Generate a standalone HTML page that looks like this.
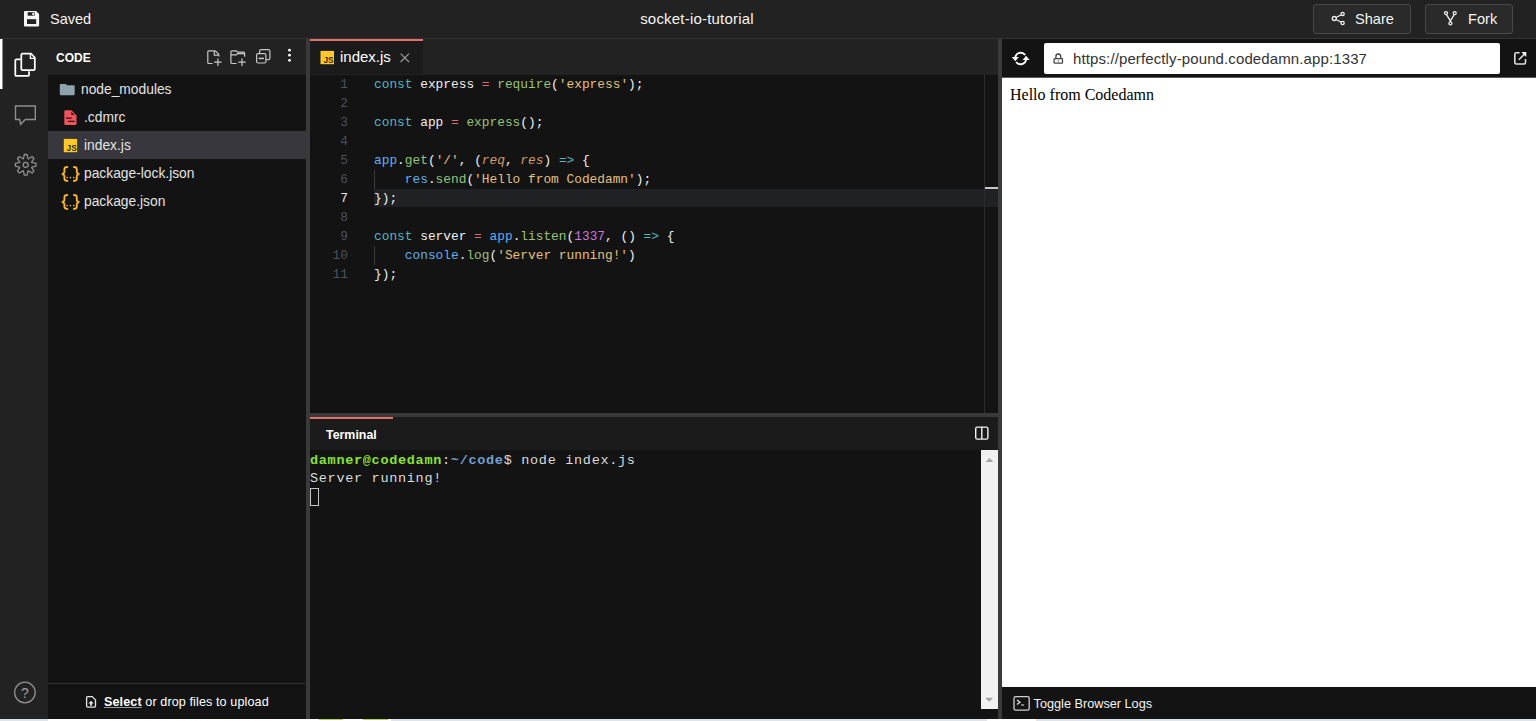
<!DOCTYPE html>
<html lang="en">
<head>
<meta charset="utf-8">
<title>socket-io-tutorial</title>
<style>
*{box-sizing:border-box;margin:0;padding:0}
html,body{width:1536px;height:721px;overflow:hidden;background:#dfe4ea}
body{font-family:"Liberation Sans",sans-serif;color:#fff;position:relative;font-size:14px}
.abs{position:absolute}
#top{left:0;top:0;width:1536px;height:39px;background:#222;border-bottom:1px solid #333}
#top .saved{left:50px;top:10px;font-size:14.5px;line-height:18px;color:#f4f4f4}
#top .title{left:0;width:1394px;top:10px;text-align:center;font-size:15px;letter-spacing:.2px;line-height:18px;color:#f4f4f4}
.btn{top:4px;height:30px;border:1px solid #494949;border-radius:3px;background:#2a2a2a;font-size:14.6px;line-height:28px;color:#f4f4f4}
#act{left:0;top:39px;width:48px;height:680px;background:#222}
#act .ind{left:0;top:0;width:3px;height:50px;background:linear-gradient(90deg,#fff 0,#fff 2px,#8c8c8c 2px)}
#files{left:48px;top:39px;width:258px;height:680px;background:#131313}
#files .hd{left:0;top:0;width:258px;height:36px;background:#222}
#files .hd .t{left:8px;top:11.6px;font-size:12px;font-weight:bold;line-height:14px;color:#fff}
.row{left:0;width:258px;height:28px;font-size:13.8px;line-height:29px;color:#e4e4e4}
.row.sel{background:#37373d}
.row span{position:absolute;top:0}
#files .up{left:0;top:644px;width:258px;height:36px;border-top:1px solid #303030;font-size:12.6px;letter-spacing:.1px;line-height:36px;color:#fff}
.vdiv{top:39px;width:4px;height:680px;background:#3a3a3a}
#tabs{left:310px;top:39px;width:688px;height:36px;background:#222}
#tabs .tab{left:0;top:0;width:113px;height:35px;background:#1b1b1b;border-top:2px solid #e2716a}
#tabs .tab .n{left:30px;top:7px;font-size:15px;line-height:18px;color:#fff}
#ed{left:310px;top:75px;width:688px;height:338px;background:#131313;overflow:hidden}
.ln{position:absolute;left:0;width:38px;text-align:right;color:#495162}
.cl{position:absolute;left:64px;white-space:pre}
#ed,.mono{font-family:"Liberation Mono",monospace;font-size:12.83px;line-height:19px}
.k{color:#56b6c2}.w{color:#f0f0f0}.r{color:#e06c75}.g{color:#98c379}.y{color:#e5c07b}.b{color:#61afef}.p{color:#c678dd}.o{color:#d19a66}.i{color:#d19a66;font-style:italic}
#hdiv{left:310px;top:413px;width:688px;height:4px;background:#3a3a3a}
#term{left:310px;top:417px;width:688px;height:302px;background:#131313}
#term .hd{left:0;top:0;width:688px;height:33px;background:#1b1b1b}
#term .hd .bar{left:0;top:0;width:83px;height:2px;background:#e2716a}
#term .hd .t{left:16px;top:10.5px;font-size:12.4px;font-weight:bold;line-height:14px}
#term .scr{left:671px;top:33px;width:17px;height:259px;background:#f1f1f1}
.tl{position:absolute;left:0;white-space:pre;font-family:"Liberation Mono",monospace;font-size:13.5px;letter-spacing:.7px;line-height:18px;color:#dcdcdc}
#br{left:1002px;top:39px;width:534px;height:680px;background:#131313}
#br .url{left:42px;top:4px;width:456px;height:31px;background:#fff;border-radius:2px;color:#333;font-size:15px;letter-spacing:.115px;line-height:31px}
#br .page{left:0;top:39px;width:534px;height:609px;background:#fff;color:#000;font-family:"Liberation Serif",serif;font-size:16px;line-height:18px}
#br .ft{left:0;top:648px;width:534px;height:32px;font-size:12.7px;line-height:32px;color:#f4f4f4}
</style>
</head>
<body>
<div class="abs" style="left:48px;top:719px;width:343px;height:2px;background:#fff"></div><div class="abs" style="left:987px;top:719px;width:49px;height:2px;background:#fff"></div><div class="abs" style="left:319px;top:719px;width:24px;height:1px;background:#b4cf4a"></div><div class="abs" style="left:363px;top:719px;width:25px;height:1px;background:#b4cf4a"></div>
<div id="top" class="abs">
  <div class="abs saved">Saved</div>
  <div class="abs title">socket-io-tutorial</div>
  <div class="abs btn" style="left:1313px;width:98px"><span class="abs" style="left:41px;top:0">Share</span></div>
  <div class="abs btn" style="left:1425px;width:88px"><span class="abs" style="left:42px;top:0">Fork</span></div>
</div>
<div id="act" class="abs"><div class="abs ind"></div></div>
<div id="files" class="abs">
  <div class="abs hd"><div class="abs t">CODE</div></div>
  <div class="abs row" style="top:36px"><span style="left:33px">node_modules</span></div>
  <div class="abs row" style="top:64px"><span style="left:36px">.cdmrc</span></div>
  <div class="abs row sel" style="top:92px"><span style="left:36px">index.js</span></div>
  <div class="abs row" style="top:120px"><span style="left:36px">package-lock.json</span></div>
  <div class="abs row" style="top:148px"><span style="left:36px">package.json</span></div>
  <div class="abs up"><span class="abs" style="left:56px;top:0;white-space:pre"><b style="text-decoration:underline;text-decoration-color:#9a9a9a">Select</b> or drop files to upload</span></div>
</div>
<div class="abs vdiv" style="left:306px"></div>
<div id="tabs" class="abs"><div class="abs tab"><div class="abs n">index.js</div></div></div>
<div id="ed" class="abs">
  <div class="abs" style="left:64px;top:114px;width:624px;height:18px;background:#1f2125"></div>
  <div class="abs" style="left:64px;top:95px;width:1px;height:19px;background:#3b3b3b"></div>
  <div class="abs" style="left:64px;top:171px;width:1px;height:19px;background:#3b3b3b"></div>
  <div class="ln" style="top:0px">1</div><div class="cl" style="top:0px"><span class="k">const</span> <span class="w">express</span> <span class="r">=</span> <span class="g">require</span><span class="w">(</span><span class="y">'express'</span><span class="w">);</span></div>
  <div class="ln" style="top:19px">2</div><div class="cl" style="top:19px"></div>
  <div class="ln" style="top:38px">3</div><div class="cl" style="top:38px"><span class="k">const</span> <span class="w">app</span> <span class="r">=</span> <span class="g">express</span><span class="w">();</span></div>
  <div class="ln" style="top:57px">4</div><div class="cl" style="top:57px"></div>
  <div class="ln" style="top:76px">5</div><div class="cl" style="top:76px"><span class="b">app</span><span class="w">.</span><span class="g">get</span><span class="w">(</span><span class="y">'/'</span><span class="w">, (</span><span class="i">req</span><span class="w">, </span><span class="i">res</span><span class="w">) </span><span class="k">=&gt;</span><span class="w"> {</span></div>
  <div class="ln" style="top:95px">6</div><div class="cl" style="top:95px">    <span class="b">res</span><span class="w">.</span><span class="g">send</span><span class="w">(</span><span class="y">'Hello from Codedamn'</span><span class="w">);</span></div>
  <div class="ln" style="top:114px;color:#e8e8e8">7</div><div class="cl" style="top:114px"><span class="w">});</span></div>
  <div class="ln" style="top:133px">8</div><div class="cl" style="top:133px"></div>
  <div class="ln" style="top:152px">9</div><div class="cl" style="top:152px"><span class="k">const</span> <span class="w">server</span> <span class="r">=</span> <span class="b">app</span><span class="w">.</span><span class="g">listen</span><span class="w">(</span><span class="p">1337</span><span class="w">, () </span><span class="k">=&gt;</span><span class="w"> {</span></div>
  <div class="ln" style="top:171px">10</div><div class="cl" style="top:171px">    <span class="b">console</span><span class="w">.</span><span class="g">log</span><span class="w">(</span><span class="y">'Server running!'</span><span class="w">)</span></div>
  <div class="ln" style="top:190px">11</div><div class="cl" style="top:190px"><span class="w">});</span></div>
  <div class="abs" style="left:674px;top:0;width:1px;height:338px;background:#2c2c2c"></div>
  <div class="abs" style="left:675px;top:112px;width:13px;height:2px;background:#c8c8c2"></div>
</div>
<div id="hdiv" class="abs"></div>
<div id="term" class="abs">
  <div class="abs hd"><div class="abs bar"></div><div class="abs t">Terminal</div></div>
  <div class="tl" style="top:34.5px"><b style="color:#8ae234">damner@codedamn</b>:<b style="color:#729fcf">~/code</b>$ node index.js</div>
  <div class="tl" style="top:52.5px">Server running!</div>
  <div class="abs" style="left:0;top:70.5px;width:9px;height:18px;border:1px solid #c4c4c4"></div>
  <div class="abs scr"></div>
</div>
<div class="abs vdiv" style="left:998px"></div>
<div id="br" class="abs">
  <div class="abs url"><span class="abs" style="left:29px;top:0">https://perfectly-pound.codedamn.app:1337</span></div>
  <div class="abs" style="left:0;top:38px;width:534px;height:1px;background:#5a5a5a"></div>
  <div class="abs page"><div class="abs" style="left:8px;top:8px">Hello from Codedamn</div></div>
  <div class="abs ft"><span class="abs" style="left:31.6px;top:1px">Toggle Browser Logs</span></div>
</div>
<svg class="abs" style="left:0;top:0" width="1536" height="721" viewBox="0 0 1536 721" fill="none">
<!-- save -->
<path d="M24 12.1a1.1 1.1 0 0 1 1.1-1.1h10.9l3.1 3.1v11.4a1.1 1.1 0 0 1-1.1 1.1h-12.9a1.1 1.1 0 0 1-1.1-1.1z" fill="#f6f6f6"/>
<rect x="27.7" y="12.2" width="7" height="3.5" fill="#222"/><rect x="32.3" y="12.8" width="1.9" height="2.4" fill="#f6f6f6"/>
<rect x="27" y="19.2" width="9.2" height="4.8" fill="#222"/>
<!-- share -->
<g stroke="#f0f0f0" stroke-width="1.3"><circle cx="1334.3" cy="18.5" r="2"/><circle cx="1342.6" cy="13.9" r="1.6"/><circle cx="1342.6" cy="23" r="1.6"/><path d="M1336.1 17.5l5.1-2.8M1336.1 19.5l5.1 2.8"/></g>
<!-- fork -->
<g stroke="#f0f0f0" stroke-width="1.3"><circle cx="1446" cy="13.1" r="1.5"/><circle cx="1454.7" cy="13.1" r="1.5"/><circle cx="1450.4" cy="23.4" r="1.5"/><path d="M1446.5 14.6l3.9 6.3 3.8-6.3M1450.4 20.5v1.4"/></g>
<!-- activity: files -->
<g stroke="#fff" stroke-width="1.75" stroke-linejoin="round"><path d="M22.4 53.7h8.6l3.8 3.8v11.4a1.1 1.1 0 0 1-1.1 1.1h-11.3a1.1 1.1 0 0 1-1.1-1.1v-14.1a1.1 1.1 0 0 1 1.1-1.1z"/><path d="M20.6 59.3h-4.2a1.1 1.1 0 0 0-1.1 1.1v14.5a1.1 1.1 0 0 0 1.1 1.1h11.5a1.1 1.1 0 0 0 1.1-1.1v-3.6"/><path d="M30.4 54.2v4.2h4.2" stroke-width="1.3"/></g>
<!-- activity: comment -->
<path d="M15.5 106h19.8v13.5h-10l-4.7 4.7-0.9-4.7h-4.2z" stroke="#8e8e8e" stroke-width="1.4"/>
<!-- activity: gear -->
<path d="M23.25 158.89 L23.63 157.59 L24.34 154.49 L27.06 154.49 L27.77 157.59 L28.15 158.89 L29.34 158.24 L32.03 156.55 L33.95 158.47 L32.26 161.16 L31.61 162.35 L32.91 162.73 L36.01 163.44 L36.01 166.16 L32.91 166.87 L31.61 167.25 L32.26 168.44 L33.95 171.13 L32.03 173.05 L29.34 171.36 L28.15 170.71 L27.77 172.01 L27.06 175.11 L24.34 175.11 L23.63 172.01 L23.25 170.71 L22.06 171.36 L19.37 173.05 L17.45 171.13 L19.14 168.44 L19.79 167.25 L18.49 166.87 L15.39 166.16 L15.39 163.44 L18.49 162.73 L19.79 162.35 L19.14 161.16 L17.45 158.47 L19.37 156.55 L22.06 158.24 Z" stroke="#8e8e8e" stroke-width="1.3" stroke-linejoin="round"/><circle cx="25.7" cy="164.8" r="2.5" stroke="#8e8e8e" stroke-width="1.3"/>
<!-- help -->
<circle cx="24.9" cy="692.5" r="10.3" stroke="#8e8e8e" stroke-width="1.3"/>
<text x="24.9" y="698.2" text-anchor="middle" font-family="Liberation Sans, sans-serif" font-size="14" fill="#a0a0a0">?</text>
<!-- file header icons -->
<g stroke="#c8c8c8" stroke-width="1.2"><path d="M212.6 63.5h-3.8a1 1 0 0 1-1-1v-10.7a1 1 0 0 1 1-1h5.6q1 0 1.8 0.8l2 2q0.7 0.8 0.7 1.8v1.2M214.3 51v4.2h4.4M217.9 58.5v7.4M214.2 62.2h7.4"/>
<path d="M236.6 63.5h-4.7a1 1 0 0 1-1-1v-10.7a1 1 0 0 1 1-1h4.4l1.3 1.4h6a1 1 0 0 1 1 1v3.5M231 54.8h5.3l1.3-1.2h6.9M242 58.5v7.4M238.3 62.2h7.4"/>
<path d="M259.6 53.5v-2.4a1.5 1.5 0 0 1 1.5-1.5h7.3a1.5 1.5 0 0 1 1.5 1.5v7.1a1.5 1.5 0 0 1-1.5 1.5h-2.2"/><rect x="256.6" y="53.7" width="9.3" height="9.3" rx="1.5"/><path d="M258.6 58.4h5.3" stroke-width="1.6"/></g>
<circle cx="289.5" cy="50.2" r="1.4" fill="#fff"/><circle cx="289.5" cy="55.2" r="1.4" fill="#fff"/><circle cx="289.5" cy="60.3" r="1.4" fill="#fff"/>
<!-- tree icons -->
<path d="M61 83.9h4.6l1.5 1.4h6.4a1.2 1.2 0 0 1 1.2 1.2v7.6a1.2 1.2 0 0 1-1.2 1.2h-12.5a1.2 1.2 0 0 1-1.2-1.2v-9a1.2 1.2 0 0 1 1.2-1.2z" fill="#8fa3ae"/>
<path d="M65.6 110.3h5.9l5 5.2v8.2a1.3 1.3 0 0 1-1.3 1.3h-9.6a1.3 1.3 0 0 1-1.3-1.3v-12.1a1.3 1.3 0 0 1 1.3-1.3z" fill="#f2525a"/>
<path d="M71.3 111.8v3.3h3.3z" fill="#2a1416"/><path d="M66 118.2h5.7M68.2 121.4h6.4" stroke="#2a1416" stroke-width="1.2"/>
<rect x="63.8" y="138.9" width="13.3" height="13.3" fill="#ffca28"/>
<text x="76.6" y="151.2" text-anchor="end" font-family="Liberation Sans, sans-serif" font-weight="bold" font-size="8.2" fill="#2e2a18">JS</text>
<path d="M67.3 167.0 q-2.9 0 -2.9 2.4 v2.4 q0 2 -2.6 2.2 q2.6 0.2 2.6 2.2 v2.4 q0 2.4 2.9 2.4 M73.9 167.0 q2.9 0 2.9 2.4 v2.4 q0 2 2.6 2.2 q-2.6 0.2 -2.6 2.2 v2.4 q0 2.4 -2.9 2.4" fill="none" stroke="#f5b82e" stroke-width="1.85" stroke-linecap="round"/><circle cx="67.1" cy="177.6" r="0.8" fill="#f5b82e" stroke="none"/><circle cx="70.4" cy="177.6" r="0.8" fill="#f5b82e" stroke="none"/><circle cx="73.8" cy="177.6" r="0.8" fill="#f5b82e" stroke="none"/>
<path d="M67.3 195.0 q-2.9 0 -2.9 2.4 v2.4 q0 2 -2.6 2.2 q2.6 0.2 2.6 2.2 v2.4 q0 2.4 2.9 2.4 M73.9 195.0 q2.9 0 2.9 2.4 v2.4 q0 2 2.6 2.2 q-2.6 0.2 -2.6 2.2 v2.4 q0 2.4 -2.9 2.4" fill="none" stroke="#f5b82e" stroke-width="1.85" stroke-linecap="round"/><circle cx="67.1" cy="205.6" r="0.8" fill="#f5b82e" stroke="none"/><circle cx="70.4" cy="205.6" r="0.8" fill="#f5b82e" stroke="none"/><circle cx="73.8" cy="205.6" r="0.8" fill="#f5b82e" stroke="none"/>
<!-- upload icon -->
<g stroke="#e8e8e8" stroke-width="1.3"><path d="M87.6 696.6h4.6l3.3 3.3v6.2a1 1 0 0 1-1 1h-6.9a1 1 0 0 1-1-1v-8.5a1 1 0 0 1 1-1z"/></g><path d="M88.3 703.6l2.7-2.9 2.7 2.9h-1.8v2.2h-1.8v-2.2z" fill="#e8e8e8"/>
<!-- tab -->
<rect x="320.5" y="50.9" width="13.5" height="13.3" fill="#ffca28"/>
<text x="333.5" y="63.2" text-anchor="end" font-family="Liberation Sans, sans-serif" font-weight="bold" font-size="8.2" fill="#2e2a18">JS</text>
<path d="M400.6 53.6l8.4 8.4M409 53.6l-8.4 8.4" stroke="#9a9a9a" stroke-width="1.2"/>
<!-- terminal split -->
<rect x="975.7" y="427.1" width="12.2" height="12" rx="1.6" stroke="#f4f4f4" stroke-width="1.4"/><path d="M981.8 427.1v12" stroke="#f4f4f4" stroke-width="1.4"/>
<!-- scroll arrows -->
<path d="M985.5 462l4-4 4 4z" fill="#a3a3a3"/><path d="M985.2 697.7l4 4 4-4z" fill="#a3a3a3"/>
<!-- refresh -->
<g stroke="#fff" stroke-width="1.9"><path d="M1015.3 57.6a5.5 5.5 0 0 1 9.9-2.6"/><path d="M1026.1 59.4a5.5 5.5 0 0 1-9.9 2.6"/></g>
<path d="M1011.8 57.1h7l-3.5 4.2z" fill="#fff"/><path d="M1029.6 59.9h-7l3.5-4.2z" fill="#fff"/>
<!-- lock -->
<g stroke="#444" stroke-width="1.3"><rect x="1054.1" y="58.6" width="8.4" height="4.6" rx="0.8"/><path d="M1055.9 58.6v-2.2a2.4 2.4 0 0 1 4.8 0v2.2"/></g><rect x="1057.8" y="60.2" width="1" height="1.4" fill="#444"/>
<!-- external -->
<g stroke="#dcdcdc" stroke-width="1.6"><path d="M1519.6 52.8h-3.3a1.5 1.5 0 0 0-1.5 1.5v8.2a1.5 1.5 0 0 0 1.5 1.5h7.7a1.5 1.5 0 0 0 1.5-1.5v-3.6M1518.8 59.8l5.4-5.4"/></g><path d="M1521.3 52h5v5z" fill="#f4f4f4"/>
<!-- log icon -->
<rect x="1014" y="696.7" width="15.2" height="13.4" rx="1.6" stroke="#cfcfcf" stroke-width="1.3"/><path d="M1017 700l3 2.3-3 2.3M1021 705h3.2" stroke="#e8e8e8" stroke-width="1.2"/>
</svg>
</body>
</html>
